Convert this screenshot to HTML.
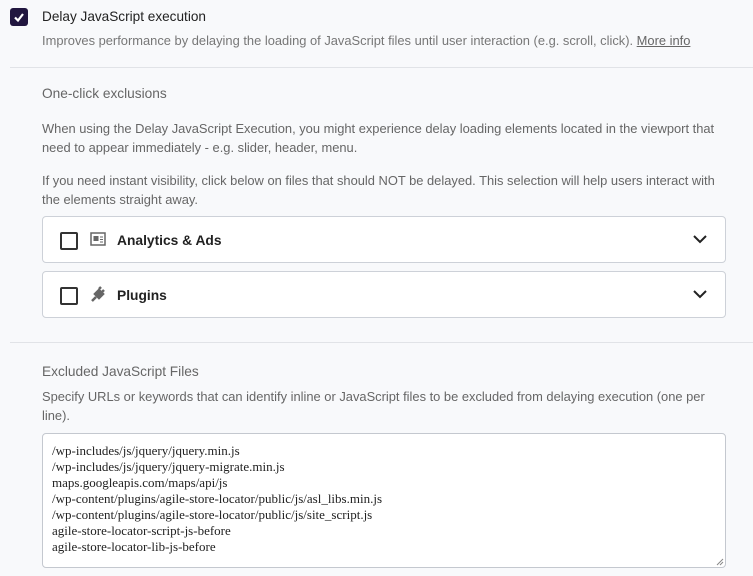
<!DOCTYPE html>
<html><head><style>
body{margin:0;width:753px;height:576px;overflow:hidden;background:#f8f9fb;font-family:"Liberation Sans",sans-serif;position:relative}
.a{position:absolute;white-space:nowrap}
.cb{position:absolute;width:18px;height:18px;border-radius:3px;background:#21163f}
.box{position:absolute;left:42px;width:682px;background:#fff;border:1.5px solid #cdd1d8;border-radius:4px}
.sq{position:absolute;left:17px;width:14px;height:14px;border:2px solid #333;border-radius:2px}
.hr{position:absolute;left:10px;right:0;height:1px;background:#e1e3e7}
.g{color:#777;font-size:12.9px}
</style></head><body>
<div class="cb" style="left:10px;top:8px"><svg width="18" height="18"><path d="M5 9.5l3 3 5-6.5" stroke="#fff" stroke-width="2.2" fill="none"/></svg></div>
<div class="a" style="left:42px;top:9px;font-size:13.6px;color:#222">Delay JavaScript execution</div>
<div class="a g" style="left:42px;top:33px">Improves performance by delaying the loading of JavaScript files until user interaction (e.g. scroll, click). <span style="text-decoration:underline;color:#666">More info</span></div>
<div class="hr" style="top:67px"></div>
<div class="a" style="left:42px;top:86px;font-size:13.7px;color:#666">One-click exclusions</div>
<div class="a g" style="left:42px;top:119px;line-height:19px;color:#666">When using the Delay JavaScript Execution, you might experience delay loading elements located in the viewport that<br>need to appear immediately - e.g. slider, header, menu.</div>
<div class="a g" style="left:42px;top:171px;line-height:19px;color:#666">If you need instant visibility, click below on files that should NOT be delayed. This selection will help users interact with<br>the elements straight away.</div>
<div class="box" style="top:216px;height:45px">
<div class="sq" style="top:15px"></div>
<svg class="a" style="left:47px;top:15px" width="16" height="14"><rect x="1" y="1" width="14" height="12" fill="none" stroke="#666" stroke-width="1.5"/><rect x="3.5" y="4" width="5" height="5" fill="#666"/><path d="M10 5h3M10 7.5h3M10 10h3" stroke="#666"/></svg>
<div class="a" style="left:74px;top:16px;font-size:13.8px;font-weight:bold;color:#222">Analytics &amp; Ads</div>
<svg class="a" style="left:650px;top:17px" width="14" height="10"><path d="M1 2l6 6 6-6" stroke="#222" stroke-width="2" fill="none"/></svg>
</div>
<div class="box" style="top:271px;height:45px">
<div class="sq" style="top:15px"></div>
<svg class="a" style="left:47px;top:14px" width="16" height="16"><path d="M2 15l4-4M5 8l4-4 4 4-4 4z M9 3l2-2M12 6l2-2" stroke="#666" stroke-width="2.5" fill="#666"/></svg>
<div class="a" style="left:74px;top:16px;font-size:13.8px;font-weight:bold;color:#222">Plugins</div>
<svg class="a" style="left:650px;top:17px" width="14" height="10"><path d="M1 2l6 6 6-6" stroke="#222" stroke-width="2" fill="none"/></svg>
</div>
<div class="hr" style="top:342px"></div>
<div class="a" style="left:42px;top:364px;font-size:13.7px;color:#666">Excluded JavaScript Files</div>
<div class="a g" style="left:42px;top:387px;line-height:19px;color:#666">Specify URLs or keywords that can identify inline or JavaScript files to be excluded from delaying execution (one per<br>line).</div>
<div class="box" style="top:433px;height:133px;border-color:#c4c8cf">
<div class="a" style="left:9px;top:9px;font-family:'Liberation Serif',serif;font-size:13px;line-height:16px;color:#222">/wp-includes/js/jquery/jquery.min.js<br>/wp-includes/js/jquery/jquery-migrate.min.js<br>maps.googleapis.com/maps/api/js<br>/wp-content/plugins/agile-store-locator/public/js/asl_libs.min.js<br>/wp-content/plugins/agile-store-locator/public/js/site_script.js<br>agile-store-locator-script-js-before<br>agile-store-locator-lib-js-before</div>
<svg class="a" style="right:1px;bottom:1px" width="8" height="8"><path d="M7 1L1 7M7 4L4 7" stroke="#888" stroke-width="1"/></svg>
</div>
</body></html>
